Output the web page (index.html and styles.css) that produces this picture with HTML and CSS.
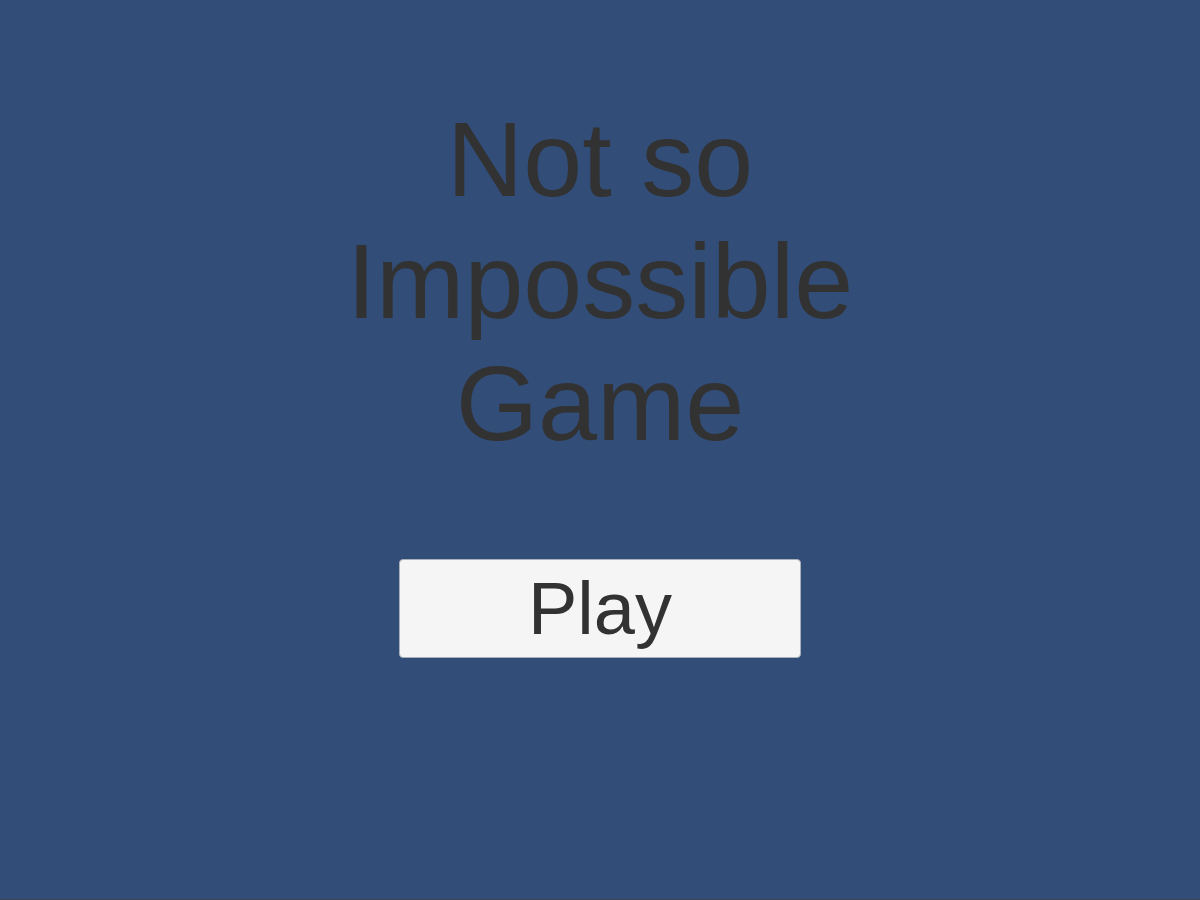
FILE: index.html
```html
<!DOCTYPE html>
<html lang="en">
<head>
    <meta charset="UTF-8">
    <meta name="viewport" content="width=device-width, initial-scale=1.0">
    <title>Not so Impossible Game</title>
    <link rel="stylesheet" href="styles.css">
</head>
<body>
    <main class="menu">
        <h1 class="title">Not so Impossible Game</h1>
        <button class="play-btn" type="button">Play</button>
    </main>
</body>
</html>
```

FILE: styles.css
```css
* {
    box-sizing: border-box;
}

body {
    margin: 0;
    min-height: 100vh;
    display: flex;
    font-family: "Liberation Sans", Arial, sans-serif;
    color: #323232;
    background: #324d78;
    border-bottom: 1px solid #3a4558;
}

.menu {
    flex: 1;
    display: flex;
    flex-direction: column;
    align-items: center;
    padding: 98px 20px 40px;
}

.title {
    max-width: 600px;
    margin: 0 0 95px;
    font-size: 106px;
    font-weight: normal;
    line-height: 122px;
    text-align: center;
}

.play-btn {
    width: 100%;
    max-width: 402px;
    padding: 7px 20px;
    border: 1px solid #a9b0ba;
    border-radius: 4px;
    font-family: inherit;
    font-size: 74px;
    line-height: 83px;
    color: inherit;
    background: #f5f5f5;
    cursor: pointer;
}

.play-btn:hover {
    background: #ffffff;
}
```
